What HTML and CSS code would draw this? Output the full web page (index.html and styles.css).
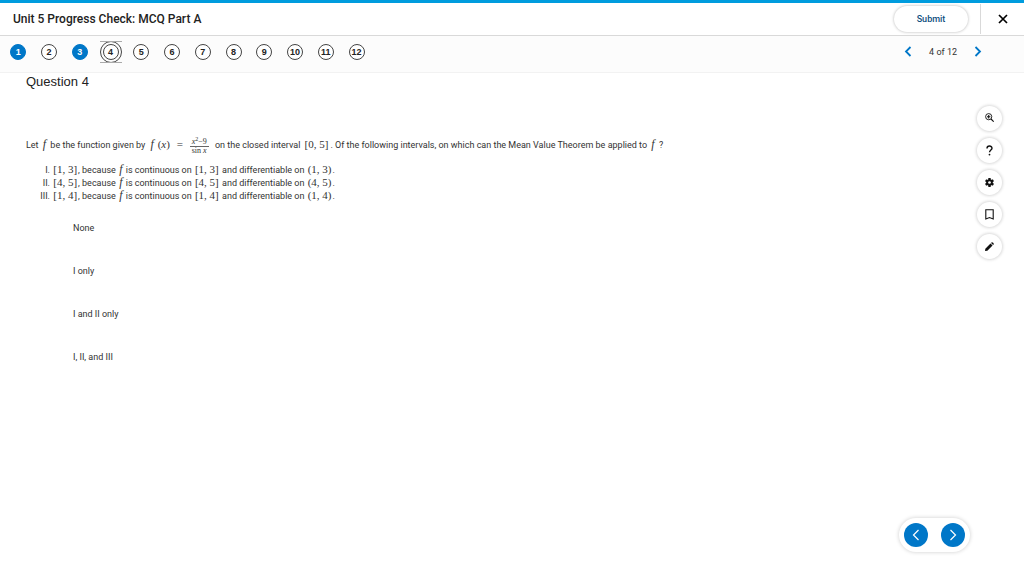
FILE: index.html
```html
<!DOCTYPE html>
<html lang="en">
<head>
    <meta charset="UTF-8">
    <meta name="viewport" content="width=device-width, initial-scale=1.0">
    <title>Unit 5 Progress Check: MCQ Part A</title>
    <link rel="stylesheet" href="styles.css">
</head>
<body>
    <header class="topbar">
        <h1>Unit 5 Progress Check: MCQ Part A</h1>
        <button class="submit" type="button">Submit</button>
        <div class="close-wrap">
            <button class="close" type="button" aria-label="Close">
                <svg width="10" height="10" viewBox="0 0 10 10"><path d="M1 1l8 8M9 1l-8 8" fill="none" stroke="#000" stroke-width="1.7"/></svg>
            </button>
        </div>
    </header>

    <nav class="pager">
        <ol class="numbers">
            <li><button type="button" class="done">1</button></li>
            <li><button type="button">2</button></li>
            <li><button type="button" class="done">3</button></li>
            <li class="current"><button type="button" aria-current="true">4</button></li>
            <li><button type="button">5</button></li>
            <li><button type="button">6</button></li>
            <li><button type="button">7</button></li>
            <li><button type="button">8</button></li>
            <li><button type="button">9</button></li>
            <li><button type="button">10</button></li>
            <li><button type="button">11</button></li>
            <li><button type="button">12</button></li>
        </ol>
        <div class="position">
            <button type="button" aria-label="Previous question">
                <svg width="8" height="12" viewBox="0 0 8 12"><path d="M6.5 1L2 5.5 6.5 10" fill="none" stroke="#0077c8" stroke-width="1.8"/></svg>
            </button>
            <span>4 of 12</span>
            <button type="button" aria-label="Next question">
                <svg width="8" height="12" viewBox="0 0 8 12"><path d="M1.5 1L6 5.5 1.5 10" fill="none" stroke="#0077c8" stroke-width="1.8"/></svg>
            </button>
        </div>
    </nav>

    <main>
        <h2>Question 4</h2>

        <div class="stem">
            <p>Let <i class="math fn">f</i> be the function given by <span class="math"><i class="fn">f</i> (<i>x</i>) <span class="eq">=</span> <span class="frac"><span class="num"><i>x</i><sup>2</sup>−9</span><span>sin <i>x</i></span></span></span> on the closed interval <span class="math">[0, 5]</span>. Of the following intervals, on which can the Mean Value Theorem be applied to <i class="math fn">f</i> ?</p>
            <ol class="statements">
                <li><span class="roman">I.</span> <span class="math">[1, 3]</span>, because <i class="math fn">f</i> is continuous on <span class="math">[1, 3]</span> and differentiable on <span class="math">(1, 3)</span>.</li>
                <li><span class="roman">II.</span> <span class="math">[4, 5]</span>, because <i class="math fn">f</i> is continuous on <span class="math">[4, 5]</span> and differentiable on <span class="math">(4, 5)</span>.</li>
                <li><span class="roman">III.</span> <span class="math">[1, 4]</span>, because <i class="math fn">f</i> is continuous on <span class="math">[1, 4]</span> and differentiable on <span class="math">(1, 4)</span>.</li>
            </ol>
        </div>

        <div class="choices" role="radiogroup">
            <label><input type="radio" name="answer" value="a"> None</label>
            <label><input type="radio" name="answer" value="b"> I only</label>
            <label><input type="radio" name="answer" value="c"> I and II only</label>
            <label><input type="radio" name="answer" value="d"> I, II, and III</label>
        </div>
    </main>

    <aside class="tools">
        <button type="button" aria-label="Zoom">
            <svg width="9" height="11" viewBox="0 0 9 11"><circle cx="3.7" cy="3.7" r="3.1" fill="none" stroke="#111" stroke-width="0.9"/><path d="M3.7 2v3.4M2 3.7h3.4" stroke="#111" stroke-width="1.1"/><path d="M6 6l2.7 2.7" stroke="#111" stroke-width="1.2"/></svg>
        </button>
        <button type="button" aria-label="Help">
            <svg width="7" height="11" viewBox="0 0 7 11"><path d="M1 3.5C1 0.3 6 0.3 6 3.2C6 5 3.5 5 3.5 7.3" fill="none" stroke="#111" stroke-width="1.4"/><circle cx="3.5" cy="9.6" r="0.9" fill="#111"/></svg>
        </button>
        <button type="button" aria-label="Settings">
            <svg width="9" height="9" viewBox="0 0 8 8"><path d="M4 0v8M0.5 2l7 4M7.5 2l-7 4" stroke="#111" stroke-width="2.1"/><circle cx="4" cy="4" r="2.9" fill="#111"/><circle cx="4" cy="4" r="1.2" fill="#fff"/></svg>
        </button>
        <button type="button" aria-label="Bookmark">
            <svg width="9" height="11" viewBox="0 0 9 11"><path d="M0.8 0.8h7.4v9.2L4.5 8.5l-3.7 1.5z" fill="none" stroke="#111" stroke-width="1.1"/></svg>
        </button>
        <button type="button" aria-label="Highlight">
            <svg width="9" height="9" viewBox="0 0 8 8"><path d="M0 8l0.3-2.1L4.9 1.3l1.8 1.8L2.1 7.7zM5.4 0.8l0.6-0.6c0.6-0.4 2.2 1 1.8 1.8l-0.6 0.6z" fill="#111"/></svg>
        </button>
    </aside>

    <div class="step">
        <button type="button" aria-label="Previous">
            <svg width="8" height="12" viewBox="0 0 8 12"><path d="M6.5 1L1.5 6l5 5" fill="none" stroke="#fff" stroke-width="1.2"/></svg>
        </button>
        <button type="button" aria-label="Next">
            <svg width="8" height="12" viewBox="0 0 8 12"><path d="M1.5 1l5 5-5 5" fill="none" stroke="#fff" stroke-width="1.2"/></svg>
        </button>
    </div>
</body>
</html>
```

FILE: styles.css
```css
* {
    box-sizing: border-box;
}
body {
    margin: 0;
    font-family: Roboto, Arial, sans-serif;
    font-size: 9px;
    color: #333;
    background: #fff;
}
h1, h2, p, ol {
    margin: 0;
    padding: 0;
}
ol {
    list-style: none;
}
button {
    display: flex;
    align-items: center;
    justify-content: center;
    padding: 0;
    border: none;
    background: none;
    font-family: inherit;
    cursor: pointer;
}
svg {
    display: block;
}

.topbar {
    display: flex;
    align-items: center;
    height: 36px;
    padding-left: 13px;
    border-top: 3px solid #009cde;
    border-bottom: 1px solid #d9d9d9;
}
h1 {
    flex: 1;
    padding-bottom: 1px;
    font-size: 12px;
    font-weight: 500;
    line-height: 14px;
    color: #222;
}
.submit {
    width: 74px;
    height: 26px;
    margin-right: 12px;
    border-radius: 13px;
    background: #fff;
    box-shadow: 0 0 3px rgba(0, 0, 0, 0.3);
    font-size: 9px;
    font-weight: 500;
    color: #0f4f80;
}
.close-wrap {
    display: flex;
    align-items: center;
    justify-content: center;
    width: 44px;
    height: 30px;
    border-left: 1px solid #d9d9d9;
}

.pager {
    display: flex;
    align-items: center;
    justify-content: space-between;
    height: 37px;
    padding: 0 42px 4px 3px;
    border-bottom: 1px solid #f2f2f2;
    background: #fcfcfc;
}
.numbers {
    display: grid;
    grid-template-columns: repeat(12, 1fr);
    align-items: center;
    justify-items: center;
    width: 369px;
}
.numbers button {
    width: 16px;
    height: 16px;
    border: 1px solid #444;
    border-radius: 50%;
    background: #fff;
    font-family: "Liberation Sans", Arial, sans-serif;
    font-size: 9px;
    font-weight: bold;
    color: #222;
}
.numbers .done {
    border-color: #0077c8;
    background: #0077c8;
    color: #fff;
}
.current {
    position: relative;
    padding: 2px;
    border: 1px solid #444;
    border-radius: 50%;
}
.current::after {
    content: "";
    position: absolute;
    inset: -1px;
    border-top: 1px solid #aaa;
    border-bottom: 1px solid #aaa;
    pointer-events: none;
}
.position {
    display: flex;
    align-items: center;
    gap: 17px;
}

main {
    padding: 0 60px 0 26px;
}
h2 {
    font-family: "Liberation Sans", Arial, sans-serif;
    font-size: 13px;
    font-weight: normal;
    line-height: 17px;
    color: #222;
}
.stem {
    margin-top: 43px;
}
.stem p {
    line-height: 24px;
}
.math {
    padding: 0 1px;
    font-family: "Liberation Serif", "Times New Roman", serif;
    font-size: 11px;
    line-height: 0;
}
.fn {
    padding: 0 1px;
    font-size: 12px;
}
.eq {
    padding: 0 4px;
}
.frac {
    display: inline-flex;
    flex-direction: column;
    align-items: center;
    vertical-align: middle;
    padding-right: 2px;
    font-size: 8px;
    line-height: 8px;
}
.num {
    padding: 0 2px;
    border-bottom: 1px solid #666;
}
.frac sup {
    font-size: 6px;
    line-height: 1;
    vertical-align: 3px;
}
.stem p .math {
    padding: 0 2px;
}
.statements {
    margin-top: 7px;
}
.statements li {
    line-height: 13px;
}
.roman {
    display: inline-block;
    width: 24px;
    text-align: right;
}
.choices {
    display: flex;
    flex-direction: column;
    align-items: flex-start;
    gap: 31px;
    margin-top: 19px;
    padding-left: 25px;
}
.choices label {
    display: flex;
    align-items: center;
    gap: 6px;
    line-height: 12px;
}
.choices input {
    width: 16px;
    height: 12px;
    margin: 0;
    opacity: 0;
}

.tools {
    position: fixed;
    top: 106px;
    right: 22px;
    display: flex;
    flex-direction: column;
    gap: 7px;
}
.tools button {
    width: 25px;
    height: 25px;
    border-radius: 50%;
    background: #fff;
    box-shadow: 0 0 3px 1px rgba(0, 0, 0, 0.15);
}
.step {
    position: fixed;
    right: 54px;
    bottom: 24px;
    display: flex;
    gap: 13px;
    padding: 5px;
    border-radius: 18px;
    background: #fff;
    box-shadow: 0 0 4px rgba(0, 0, 0, 0.2);
}
.step button {
    width: 24px;
    height: 24px;
    border-radius: 50%;
    background: #0077c8;
}
```
